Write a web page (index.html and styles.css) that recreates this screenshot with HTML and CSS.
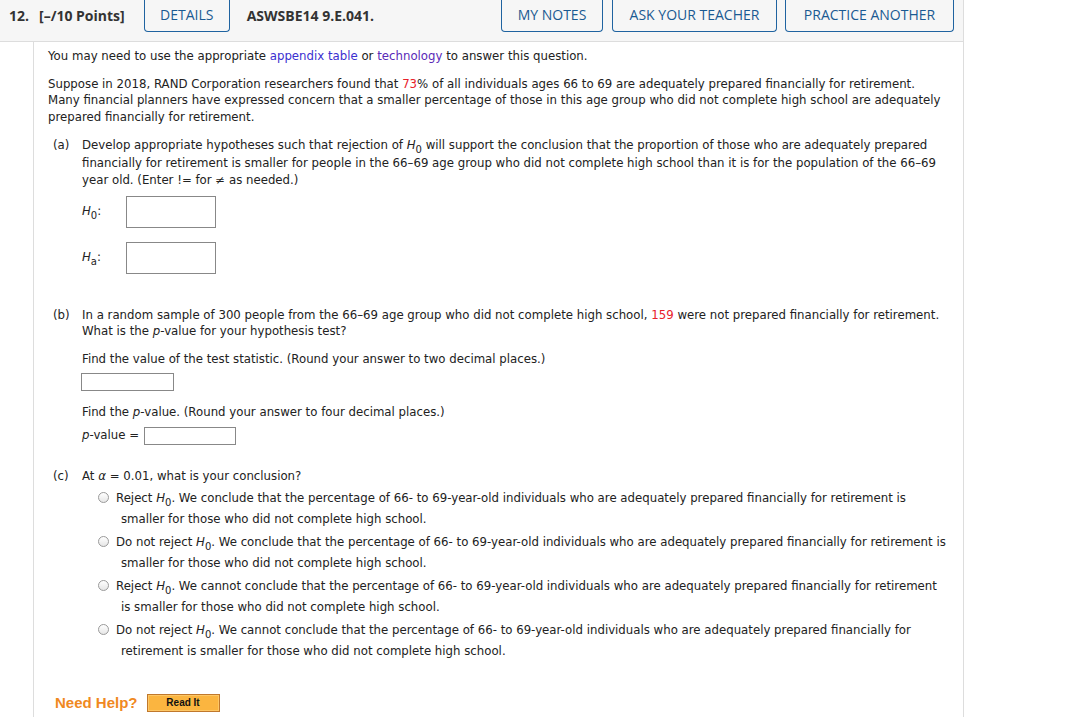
FILE: index.html
```html
<!DOCTYPE html>
<html>
<head>
<meta charset="utf-8">
<link rel="stylesheet" href="styles.css">
</head>
<body>
<div class="question">
  <div class="qhead">
    <span class="qnum">12.</span>
    <span class="pts">[–/10 Points]</span>
    <span class="tab tab-details">DETAILS</span>
    <span class="code">ASWSBE14 9.E.041.</span>
    <span class="spacer"></span>
    <span class="tab tab-notes">MY NOTES</span>
    <span class="tab tab-ask">ASK YOUR TEACHER</span>
    <span class="tab tab-practice">PRACTICE ANOTHER</span>
  </div>
  <div class="qbody">
    <p class="intro">You may need to use the appropriate <span class="link1">appendix table</span> or <span class="link2">technology</span> to answer this question.</p>
    <p class="stem">Suppose in 2018, RAND Corporation researchers found that <span class="red">73</span>% of all individuals ages 66 to 69 are adequately prepared financially for retirement.<br>Many financial planners have expressed concern that a smaller percentage of those in this age group who did not complete high school are adequately<br>prepared financially for retirement.</p>

    <div class="part part-a">
      <span class="plabel">(a)</span>
      <div class="ptext">
        <p>Develop appropriate hypotheses such that rejection of <i>H</i><sub>0</sub> will support the conclusion that the proportion of those who are adequately prepared<br>financially for retirement is smaller for people in the 66–69 age group who did not complete high school than it is for the population of the 66–69<br>year old. (Enter != for ≠ as needed.)</p>
        <div class="hyp">
          <span class="hlabel"><i>H</i><sub>0</sub>:</span>
          <span class="box big"></span>
        </div>
        <div class="hyp">
          <span class="hlabel"><i>H</i><sub>a</sub>:</span>
          <span class="box big"></span>
        </div>
      </div>
    </div>

    <div class="part part-b">
      <span class="plabel">(b)</span>
      <div class="ptext">
        <p>In a random sample of 300 people from the 66–69 age group who did not complete high school, <span class="red">159</span> were not prepared financially for retirement.<br>What is the <i>p</i>-value for your hypothesis test?</p>
        <p class="find1">Find the value of the test statistic. (Round your answer to two decimal places.)</p>
        <span class="box small stat"></span>
        <p class="find2">Find the <i>p</i>-value. (Round your answer to four decimal places.)</p>
        <div class="pv"><span><i>p</i>-value =</span><span class="box small"></span></div>
      </div>
    </div>

    <div class="part part-c">
      <span class="plabel">(c)</span>
      <div class="ptext">
        <p>At <i>α</i> = 0.01, what is your conclusion?</p>
      </div>
    </div>
    <div class="options">
      <p class="opt"><span class="radio"></span>Reject <i>H</i><sub>0</sub>. We conclude that the percentage of 66- to 69-year-old individuals who are adequately prepared financially for retirement is<br>smaller for those who did not complete high school.</p>
      <p class="opt"><span class="radio"></span>Do not reject <i>H</i><sub>0</sub>. We conclude that the percentage of 66- to 69-year-old individuals who are adequately prepared financially for retirement is<br>smaller for those who did not complete high school.</p>
      <p class="opt"><span class="radio"></span>Reject <i>H</i><sub>0</sub>. We cannot conclude that the percentage of 66- to 69-year-old individuals who are adequately prepared financially for retirement<br>is smaller for those who did not complete high school.</p>
      <p class="opt"><span class="radio"></span>Do not reject <i>H</i><sub>0</sub>. We cannot conclude that the percentage of 66- to 69-year-old individuals who are adequately prepared financially for<br>retirement is smaller for those who did not complete high school.</p>
    </div>

    <div class="help">
      <span class="need">Need Help?</span>
      <span class="readit">Read It</span>
    </div>
  </div>
</div>
</body>
</html>
```

FILE: styles.css
```css
html, body {
  margin: 0;
  padding: 0;
  background: #fff;
}
.question {
  width: 964px;
  font-family: "DejaVu Sans", Verdana, sans-serif;
  font-size: 11.75px;
  color: #222;
}
.qhead {
  display: flex;
  align-items: flex-start;
  height: 41px;
  background: #f6f6f6;
  border-bottom: 1px solid #ddd;
  border-right: 1px solid #ddd;
  font-family: "Open Sans", sans-serif;
  font-size: 14px;
  color: #333;
  box-sizing: content-box;
}
.qnum {
  font-weight: 700;
  margin: 6px 0 0 9px;
}
.pts {
  font-weight: 700;
  margin: 6px 0 0 10px;
}
.code {
  font-weight: 700;
  margin: 6px 0 0 17px;
}
.spacer { flex: 1; }
.tab {
  display: block;
  height: 32px;
  box-sizing: border-box;
  border: 1px solid #1f63a0;
  border-top: none;
  border-radius: 0 0 4px 4px;
  color: #1a5a92;
  text-align: center;
  padding-top: 5px;
}
.tab-details { width: 86px; margin-left: 19px; }
.tab-notes { width: 102px; }
.tab-ask { width: 165px; margin-left: 9px; }
.tab-practice { width: 169px; margin-left: 8px; margin-right: 9px; }

.qbody {
  margin-left: 33px;
  border-left: 1px solid #ddd;
  border-right: 1px solid #ddd;
  padding: 6px 4px 6px 14px;
  line-height: 16.5px;
}
p { margin: 0; white-space: nowrap; }
.intro { margin-bottom: 11px; }
.stem { margin-bottom: 12px; }
.link1 { color: #3b2fd0; }
.link2 { color: #5a2ab8; }
.red { color: #e8212a; }
sub {
  font-size: 10px;
  line-height: 0;
  vertical-align: -4px;
}
i { font-style: italic; }

.part {
  display: flex;
}
.plabel {
  width: 29px;
  margin-left: 5px;
  flex: none;
}
.ptext { flex: 1; }
.part-a .ptext > p { line-height: 17.5px; }
.hyp {
  display: flex;
  align-items: center;
  margin-top: 14px;
}
.hyp:first-of-type { margin-top: 6px; }
.hlabel {
  width: 44px;
}
.box {
  display: inline-block;
  box-sizing: border-box;
  border: 1px solid #888;
  background: #fff;
}
.box.big { width: 90px; height: 32px; }
.box.small { width: 93px; height: 18px; }
.part-b { margin-top: 33px; }
.find1 { margin-top: 11px; }
.stat { display: block; margin-top: 6px; margin-left: -1px; }
.find2 { margin-top: 13px; }
.pv {
  display: flex;
  align-items: center;
  margin-top: 6px;
}
.pv .box { margin-left: 5px; width: 92px; }
.part-c { margin-top: 23px; }
.options {
  margin-top: 4px;
}
.opt {
  padding-left: 73px;
  text-indent: -23px;
  line-height: 20.5px;
  margin-bottom: 3px;
}
.radio {
  display: inline-block;
  width: 11px;
  height: 11px;
  box-sizing: border-box;
  border: 1px solid #9a9a9a;
  border-radius: 50%;
  background: linear-gradient(#fff, #e6e6e6);
  margin-right: 7px;
  vertical-align: -1px;
  text-indent: 0;
}
.help {
  display: flex;
  align-items: center;
  margin-top: 33px;
  margin-left: 7px;
  padding-bottom: 4px;
}
.need {
  font-family: "Liberation Sans", Arial, sans-serif;
  font-weight: 700;
  font-size: 15px;
  color: #f0891f;
}
.readit {
  display: inline-block;
  margin-left: 9px;
  width: 73px;
  height: 18px;
  box-sizing: border-box;
  border: 1px solid #c0782c;
  background: #fbb540;
  box-shadow: inset 0 0 0 1px #fdc766;
  font-family: "Liberation Sans", Arial, sans-serif;
  font-weight: 700;
  font-size: 10px;
  color: #111;
  text-align: center;
  line-height: 16px;
}
```
